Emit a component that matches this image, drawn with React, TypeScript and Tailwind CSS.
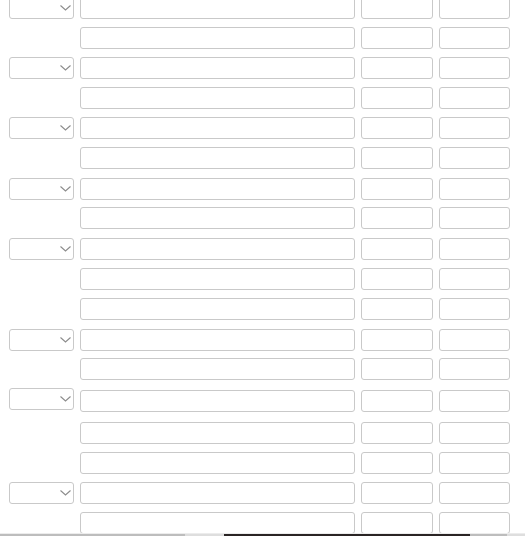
type Row = { gap: string; select?: boolean; selectShift?: boolean };

// gaps between rows were measured off the screenshot, they are not quite even
const rows: Row[] = [
  { gap: "mt-[-3px]", select: true },
  { gap: "mt-[8px]" },
  { gap: "mt-[8px]", select: true },
  { gap: "mt-[8px]" },
  { gap: "mt-[8px]", select: true },
  { gap: "mt-[8px]" },
  { gap: "mt-[9px]", select: true },
  { gap: "mt-[7px]" },
  { gap: "mt-[9px]", select: true },
  { gap: "mt-[8px]" },
  { gap: "mt-[8px]" },
  { gap: "mt-[9px]", select: true },
  { gap: "mt-[7px]" },
  { gap: "mt-[10px]", select: true, selectShift: true },
  { gap: "mt-[10px]" },
  { gap: "mt-[8px]" },
  { gap: "mt-[8px]", select: true },
  { gap: "mt-[8px]" },
];

function Select({ shift }: { shift?: boolean }) {
  return (
    <div
      className={`flex h-[22px] w-[65px] items-center justify-end rounded-[3px] border border-[#c9c9c9] bg-white pb-[1px] pr-[2px] ${
        shift ? "-mt-[2px]" : ""
      }`}
    >
      <svg width="11" height="6" viewBox="0 0 11 6" fill="none">
        <polyline points="0.5,0.5 5.5,5 10.5,0.5" stroke="#8c8c8c" strokeWidth="1.1" />
      </svg>
    </div>
  );
}

function Field({ width }: { width: string }) {
  return <input type="text" className={`h-[22px] ${width} rounded-[3px] border border-[#c9c9c9] bg-white outline-none`} />;
}

export default function App() {
  return (
    <div className="flex h-[536px] w-[525px] flex-col overflow-hidden bg-white font-['Liberation_Sans',sans-serif]">
      <div className="flex-1 overflow-hidden">
        {rows.map((r, i) => (
          <div key={i} className={`flex items-start gap-[6px] pl-[9px] ${r.gap}`}>
            <div className="w-[65px] shrink-0">{r.select && <Select shift={r.selectShift} />}</div>
            <Field width="w-[275px]" />
            <Field width="w-[72px]" />
            <Field width="w-[71px]" />
          </div>
        ))}
      </div>
      {/* the strip at the very bottom of the shot */}
      <div className="h-[1px] bg-[#ececec]" />
      <div className="flex h-[2px]">
        <div className="w-[185px] bg-[#bdbdbd]" />
        <div className="w-[39px] bg-[#dedede]" />
        <div className="w-[246px] bg-[#2a2424]" />
        <div className="w-[37px] bg-[#bdbdbd]" />
        <div className="flex-1 bg-[#dedede]" />
      </div>
    </div>
  );
}
